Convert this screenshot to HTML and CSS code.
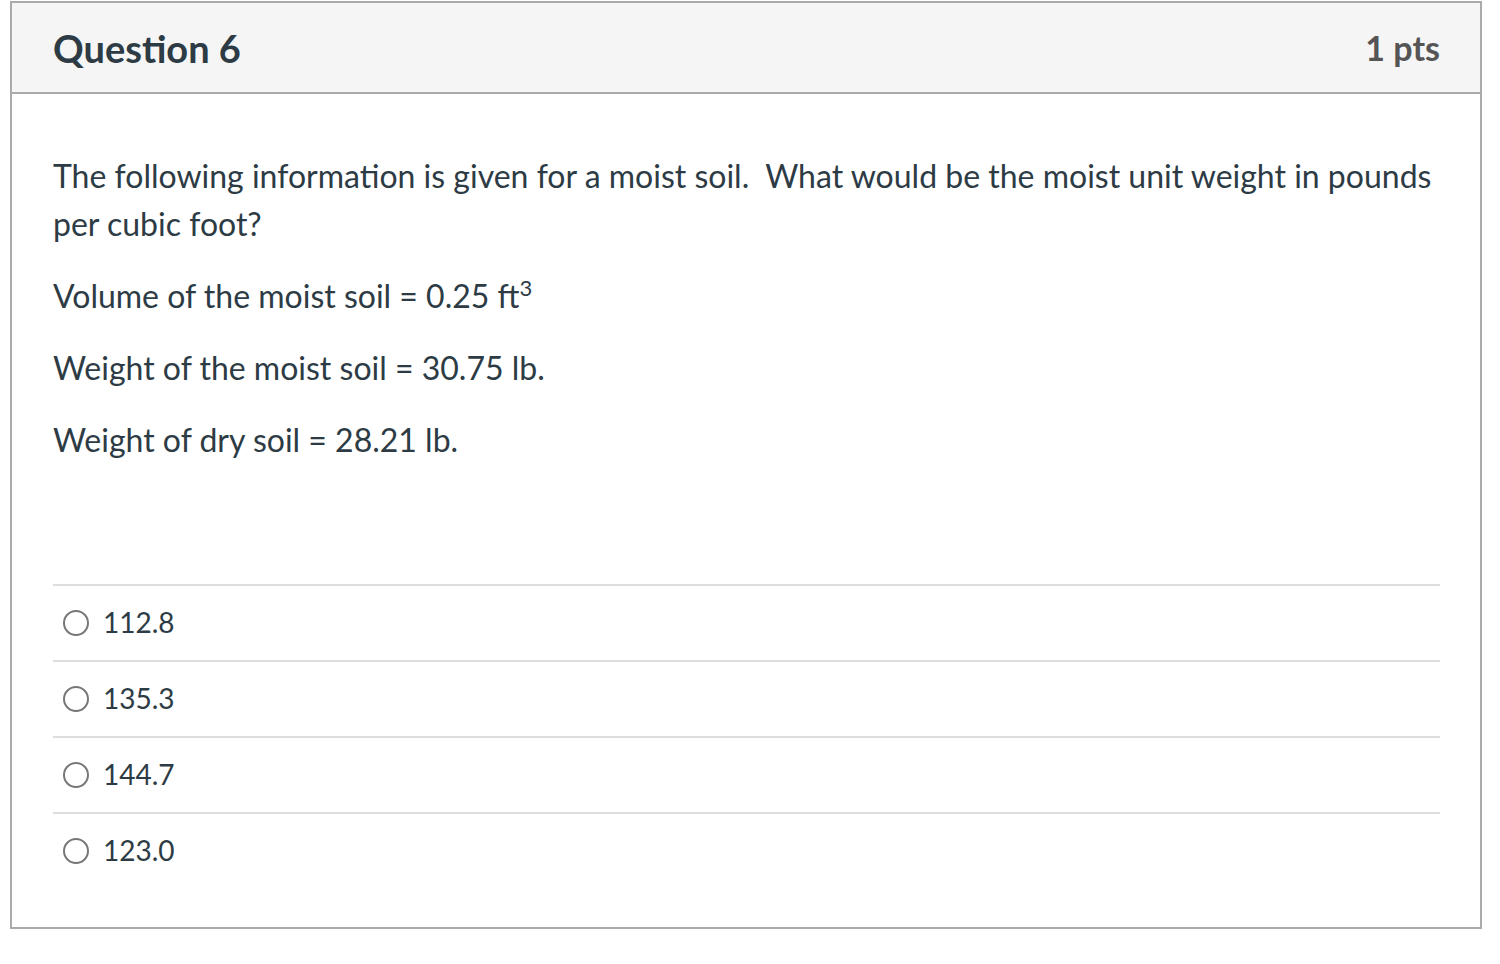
FILE: index.html
```html
<!DOCTYPE html>
<html>
<head>
<meta charset="utf-8">
<link rel="stylesheet" href="styles.css">
</head>
<body>
<div class="question">
  <div class="header">
    <div class="title">Question 6</div>
    <div class="pts">1 pts</div>
  </div>
  <div class="content">
    <div class="text">
      <p>The following information is given for a moist soil.&nbsp; What would be the moist unit weight in pounds per cubic foot?</p>
      <p>Volume of the moist soil = 0.25 ft<sup>3</sup></p>
      <p>Weight of the moist soil = 30.75 lb.</p>
      <p>Weight of dry soil = 28.21 lb.</p>
    </div>
    <div class="answers">
      <div class="answer"><span class="radio"></span><span class="label">112.8</span></div>
      <div class="answer"><span class="radio"></span><span class="label">135.3</span></div>
      <div class="answer"><span class="radio"></span><span class="label">144.7</span></div>
      <div class="answer"><span class="radio"></span><span class="label">123.0</span></div>
    </div>
  </div>
</div>
</body>
</html>
```

FILE: styles.css
```css
html, body {
  margin: 0;
  padding: 0;
  background: #ffffff;
}
body {
  font-family: Lato, "Liberation Sans", sans-serif;
  color: #2d3b45;
}
.question {
  margin: 1px 18px 0 10px;
  border: 2px solid #aaaaaa;
  box-sizing: border-box;
  height: 928px;
}
.header {
  display: flex;
  justify-content: space-between;
  align-items: center;
  height: 89px;
  padding: 0 40px 0 41px;
  background: #f5f5f5;
  border-bottom: 2px solid #aaaaaa;
}
.title {
  font-size: 38px;
  font-weight: 700;
  color: #2d3b45;
}
.pts {
  font-size: 34px;
  font-weight: 700;
  color: #555555;
}
.content {
  padding: 58px 40px 0 41px;
}
.text {
  font-size: 32px;
  line-height: 48px;
}
.text p {
  margin: 0 0 24px 0;
}
.text sup {
  font-size: 22px;
  line-height: 0;
  vertical-align: 12px;
}
.answers {
  margin-top: 120px;
}
.answer {
  display: flex;
  align-items: center;
  box-sizing: border-box;
  height: 76px;
  padding: 0 0 2px 10px;
  border-top: 2px solid #dddddd;
}
.radio {
  width: 22px;
  height: 22px;
  border: 2px solid #777777;
  border-radius: 50%;
  margin-right: 14px;
  margin-top: 2px;
  background: #fff;
}
.label {
  font-size: 28px;
  color: #2d3b45;
}
```
